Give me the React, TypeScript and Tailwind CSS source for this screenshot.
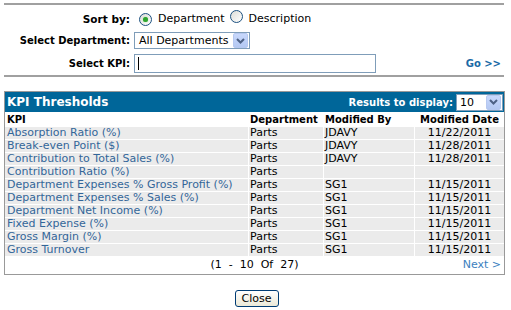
import React from "react";

const rows: [string, string, string, string][] = [
  ["Absorption Ratio (%)", "Parts", "JDAVY", "11/22/2011"],
  ["Break-even Point ($)", "Parts", "JDAVY", "11/28/2011"],
  ["Contribution to Total Sales (%)", "Parts", "JDAVY", "11/28/2011"],
  ["Contribution Ratio (%)", "Parts", "", ""],
  ["Department Expenses % Gross Profit (%)", "Parts", "SG1", "11/15/2011"],
  ["Department Expenses % Sales (%)", "Parts", "SG1", "11/15/2011"],
  ["Department Net Income (%)", "Parts", "SG1", "11/15/2011"],
  ["Fixed Expense (%)", "Parts", "SG1", "11/15/2011"],
  ["Gross Margin (%)", "Parts", "SG1", "11/15/2011"],
  ["Gross Turnover", "Parts", "SG1", "11/15/2011"],
];

function Radio({ checked }: { checked?: boolean }) {
  return (
    <span className="inline-flex w-[13px] h-[13px] rounded-full border border-[#1c5180] bg-gradient-to-br from-[#dcdcd7] to-[#ffffff] items-center justify-center shrink-0">
      {checked && (
        <span className="w-[5px] h-[5px] rounded-full bg-[#2fa52f] shadow-[0_0_1px_#70d070]" />
      )}
    </span>
  );
}

function DropBtn() {
  return (
    <span className="w-[15px] h-[15px] bg-gradient-to-b from-[#c8d8fc] to-[#b4c8f2] border border-[#b6c8f0] rounded-[2px] flex items-center justify-center shrink-0">
      <svg width="9" height="6" viewBox="0 0 9 6">
        <path d="M1 1 L4.5 4.5 L8 1" fill="none" stroke="#4d6185" strokeWidth="2" />
      </svg>
    </span>
  );
}

export default function App() {
  return (
    <div className="w-[511px] h-[310px] bg-white font-['DejaVu_Sans',sans-serif] text-[11px] text-black pt-[3px] overflow-hidden">
      <div className="ml-[4px] w-[500px] border-t-2 border-b-2 border-[#a0a0a0] flex flex-col">
        <div className="grid grid-cols-[126px_1fr] gap-x-[4px] h-[26px] pt-[3px] items-center">
          <div className="text-right font-bold text-[10.5px]">Sort by:</div>
          <div className="flex items-center">
            <span className="ml-[5px]"><Radio checked /></span>
            <span className="ml-[6px] text-[11px]">Department</span>
            <span className="ml-[5px]"><Radio /></span>
            <span className="ml-[6px] text-[11px]">Description</span>
          </div>
        </div>
        <div className="grid grid-cols-[126px_1fr] gap-x-[4px] h-[17px] mt-[1px] items-center">
          <div className="text-right font-bold text-[10px]">Select Department:</div>
          <div className="w-[116px] h-[17px] border border-[#7f9db9] bg-white flex items-center justify-between pl-[4px] pr-[1px]">
            <span className="text-[11px] leading-none">All Departments</span>
            <DropBtn />
          </div>
        </div>
        <div className="grid grid-cols-[126px_1fr] gap-x-[4px] h-[19px] mt-[5px] mb-[2px] items-center">
          <div className="text-right font-bold text-[10px]">Select KPI:</div>
          <div className="flex items-center justify-between pr-[3px]">
            <div className="w-[242px] h-[19px] border border-[#7f9db9] bg-white flex items-center pl-[3px]">
              <span className="w-px h-[13px] bg-black" />
            </div>
            <span className="text-[10px] font-bold text-[#1a6aa6]">Go &gt;&gt;</span>
          </div>
        </div>
      </div>

      <div className="ml-[4px] mt-[14px] w-[501px] border border-[#999999]">
        <div className="h-[20px] bg-[#006699] flex items-center justify-between pl-[2px] pr-px">
          <span className="text-[12px] font-bold text-white leading-none">KPI Thresholds</span>
          <div className="flex items-center">
            <span className="text-[10px] font-bold text-white mr-[3px]">Results to display:</span>
            <div className="w-[47px] h-[17px] border border-[#7f9db9] bg-white flex items-center justify-between pl-[3px] pr-px">
              <span className="text-[11px] leading-none">10</span>
              <DropBtn />
            </div>
          </div>
        </div>
        <div className="grid grid-cols-[243px_74px_90px_89px] gap-px bg-white">
          <div className="h-[14px] flex items-center pl-[2px] font-bold text-[10px]">KPI</div>
          <div className="h-[14px] flex items-center pl-[1px] font-bold text-[10px]">Department</div>
          <div className="h-[14px] flex items-center pl-[1px] font-bold text-[10px]">Modified By</div>
          <div className="h-[14px] flex items-center justify-center font-bold text-[10px]">Modified Date</div>
          {rows.map((r, i) => (
            <React.Fragment key={i}>
              <div className="h-[12px] bg-[#ebebeb] flex items-center pl-[2px] text-[11px] text-[#336699] whitespace-nowrap">{r[0]}</div>
              <div className="h-[12px] bg-[#ebebeb] flex items-center pl-[1px] text-[11px]">{r[1]}</div>
              <div className="h-[12px] bg-[#ebebeb] flex items-center pl-[1px] text-[11px]">{r[2]}</div>
              <div className="h-[12px] bg-[#ebebeb] flex items-center justify-center text-[11px]">{r[3]}</div>
            </React.Fragment>
          ))}
        </div>
        <div className="h-[18px] flex items-center justify-center relative text-[11px]">
          <span>(1&nbsp; - &nbsp;10&nbsp; Of&nbsp; 27)</span>
          <span className="absolute right-[3px] text-[#3b7fc0]">Next &gt;</span>
        </div>
      </div>

      <div className="flex justify-center mt-[15px] pl-[2px]">
        <button className="w-[44px] h-[17px] rounded-[3px] border border-[#003c74] bg-gradient-to-b from-[#ffffff] to-[#ece9d8] text-[11px] leading-none flex items-center justify-center">
          Close
        </button>
      </div>
    </div>
  );
}
